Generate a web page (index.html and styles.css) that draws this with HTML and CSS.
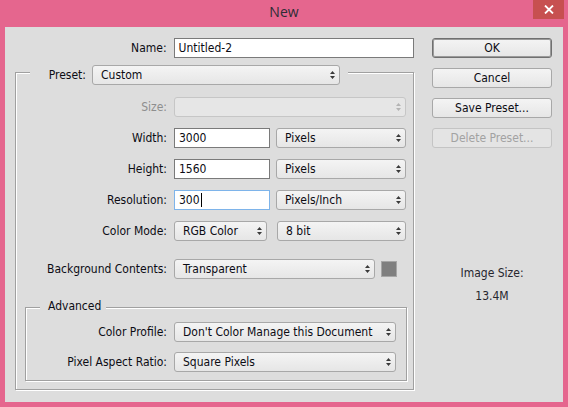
FILE: index.html
```html
<!DOCTYPE html>
<html>
<head>
<meta charset="utf-8">
<link rel="stylesheet" href="styles.css">
</head>
<body>
<div class="titlebar">
  <span></span>
  <div class="title">New</div>
  <div class="close"><svg width="10" height="9" viewBox="0 0 10 9"><path d="M1 0.5 L9 8.5 M9 0.5 L1 8.5" stroke="#fff" stroke-width="1.8"/></svg></div>
</div>
<div class="client">
  <div class="left">
    <div class="namerow">
      <span class="namelbl">Name:</span>
      <div class="input name">Untitled-2</div>
    </div>
    <div class="group">
      <div class="ghead">
        <span class="plbl">Preset:</span>
        <div class="select preset"><span>Custom</span><svg class="arr" width="5" height="8" viewBox="0 0 5 8"><path d="M0 3 L2.5 0 L5 3 Z M0 5 L2.5 8 L5 5 Z" fill="#3a3a3a"/></svg></div>
      </div>
      <div class="fields">
        <div class="row">
          <span class="lbl dis">Size:</span>
          <div class="select disabled wsize"><span></span><svg class="arr" width="5" height="8" viewBox="0 0 5 8"><path d="M0 3 L2.5 0 L5 3 Z M0 5 L2.5 8 L5 5 Z" fill="#b4b4b4"/></svg></div>
        </div>
        <div class="row">
          <span class="lbl">Width:</span>
          <div class="input num">3000</div>
          <div class="select unit"><span>Pixels</span><svg class="arr" width="5" height="8" viewBox="0 0 5 8"><path d="M0 3 L2.5 0 L5 3 Z M0 5 L2.5 8 L5 5 Z" fill="#3a3a3a"/></svg></div>
        </div>
        <div class="row">
          <span class="lbl">Height:</span>
          <div class="input num">1560</div>
          <div class="select unit"><span>Pixels</span><svg class="arr" width="5" height="8" viewBox="0 0 5 8"><path d="M0 3 L2.5 0 L5 3 Z M0 5 L2.5 8 L5 5 Z" fill="#3a3a3a"/></svg></div>
        </div>
        <div class="row">
          <span class="lbl">Resolution:</span>
          <div class="input num focus">300<span class="caret"></span></div>
          <div class="select unit"><span>Pixels/Inch</span><svg class="arr" width="5" height="8" viewBox="0 0 5 8"><path d="M0 3 L2.5 0 L5 3 Z M0 5 L2.5 8 L5 5 Z" fill="#3a3a3a"/></svg></div>
        </div>
        <div class="row">
          <span class="lbl">Color Mode:</span>
          <div class="select mode"><span>RGB Color</span><svg class="arr" width="5" height="8" viewBox="0 0 5 8"><path d="M0 3 L2.5 0 L5 3 Z M0 5 L2.5 8 L5 5 Z" fill="#3a3a3a"/></svg></div>
          <div class="select bits"><span>8 bit</span><svg class="arr" width="5" height="8" viewBox="0 0 5 8"><path d="M0 3 L2.5 0 L5 3 Z M0 5 L2.5 8 L5 5 Z" fill="#3a3a3a"/></svg></div>
        </div>
        <div class="row spaced">
          <span class="lbl">Background Contents:</span>
          <div class="select bg"><span>Transparent</span><svg class="arr" width="5" height="8" viewBox="0 0 5 8"><path d="M0 3 L2.5 0 L5 3 Z M0 5 L2.5 8 L5 5 Z" fill="#3a3a3a"/></svg></div>
          <div class="swatch"></div>
        </div>
      </div>
      <div class="adv">
        <div class="ahead">Advanced</div>
        <div class="afields">
          <div class="row">
            <span class="albl">Color Profile:</span>
            <div class="select wide"><span>Don't Color Manage this Document</span><svg class="arr" width="5" height="8" viewBox="0 0 5 8"><path d="M0 3 L2.5 0 L5 3 Z M0 5 L2.5 8 L5 5 Z" fill="#3a3a3a"/></svg></div>
          </div>
          <div class="row">
            <span class="albl">Pixel Aspect Ratio:</span>
            <div class="select wide"><span>Square Pixels</span><svg class="arr" width="5" height="8" viewBox="0 0 5 8"><path d="M0 3 L2.5 0 L5 3 Z M0 5 L2.5 8 L5 5 Z" fill="#3a3a3a"/></svg></div>
          </div>
        </div>
      </div>
    </div>
  </div>
  <div class="right">
    <div class="buttons">
      <div class="btn default">OK</div>
      <div class="btn">Cancel</div>
      <div class="btn">Save Preset...</div>
      <div class="btn disabled">Delete Preset...</div>
    </div>
    <div class="info">
      <div class="il">Image Size:</div>
      <div class="iv">13.4M</div>
    </div>
  </div>
</div>
</body>
</html>
```

FILE: styles.css
```css
html, body {
  margin: 0;
  padding: 0;
}
body {
  background: #e5668e;
  width: 568px;
  height: 407px;
  overflow: hidden;
  font-family: "DejaVu Sans Condensed", "DejaVu Sans", sans-serif;
  font-stretch: condensed;
  font-size: 12px;
  color: #0c0c14;
}
.titlebar {
  height: 27px;
  display: grid;
  grid-template-columns: 1fr auto 1fr;
  align-items: start;
}
.title {
  font-family: "Open Sans", "Noto Sans", sans-serif;
  font-stretch: normal;
  font-size: 14px;
  color: #2d2d35;
  line-height: 24px;
}
.close {
  justify-self: end;
  margin-right: 4px;
  width: 31px;
  height: 19px;
  background: #c75050;
  display: flex;
  align-items: center;
  justify-content: center;
}
.client {
  margin: 0 5px;
  height: 375px;
  background: #dddddd;
  display: flex;
  padding-top: 11px;
  box-sizing: border-box;
}
.left {
  margin-left: 10px;
  width: 399px;
}
.namerow {
  display: flex;
  align-items: center;
  height: 20px;
}
.namelbl {
  width: 152px;
  text-align: right;
  margin-right: 7px;
}
.input {
  height: 20px;
  box-sizing: border-box;
  border: 1px solid #7a7a7a;
  background: #fff;
  padding-left: 4px;
  display: flex;
  align-items: center;
}
.input.name {
  width: 241px;
}
.input.num {
  width: 96px;
  margin-right: 6px;
}
.input.focus {
  border-color: #7eb4ea;
}
.caret {
  display: inline-block;
  width: 1px;
  height: 14px;
  background: #000;
  margin-left: 1px;
}
.group {
  margin-top: 14px;
  border: 1px solid #a0a0a0;
  box-shadow: inset 1px 1px 0 #fff, 1px 1px 0 #fff;
  padding-bottom: 8px;
}
.ghead {
  display: flex;
  align-items: center;
  width: fit-content;
  margin: -8px 0 0 14px;
  padding-right: 8px;
  background: #dddddd;
}
.plbl {
  width: 56px;
  text-align: right;
  margin-right: 6px;
}
.select {
  height: 20px;
  box-sizing: border-box;
  border: 1px solid #a8a8a8;
  border-radius: 3px;
  background: linear-gradient(#f4f4f4, #e6e6e6);
  padding: 0 4px 0 8px;
  display: flex;
  align-items: center;
  justify-content: space-between;
  white-space: nowrap;
}
.select.disabled {
  border-color: #c6c6c6;
  background: #e6e6e6;
}
.arr {
  flex: none;
}
.preset { width: 248px; }
.wsize { width: 232px; }
.unit { width: 130px; }
.mode { width: 93px; margin-right: 10px; }
.bits { width: 129px; }
.bg { width: 201px; margin-right: 6px; }
.wide { width: 222px; }
.swatch {
  width: 16px;
  height: 16px;
  box-sizing: border-box;
  border: 1px solid #a6a6a6;
  background: #7f7f7f;
}
.fields {
  display: flex;
  flex-direction: column;
  gap: 11px;
  margin-top: 12px;
}
.row {
  display: flex;
  align-items: center;
  height: 20px;
}
.row.spaced {
  margin-top: 7px;
}
.lbl {
  width: 151px;
  text-align: right;
  margin-right: 7px;
}
.lbl.dis {
  color: #8e8e8e;
}
.adv {
  margin: 28px 6px 0 9px;
  border: 1px solid #a0a0a0;
  box-shadow: inset 1px 1px 0 #fff, 1px 1px 0 #fff;
  padding-bottom: 8px;
}
.ahead {
  width: fit-content;
  margin: -9px 0 0 14px;
  padding: 0 5px 0 8px;
  height: 14px;
  line-height: 14px;
  background: #dddddd;
}
.afields {
  display: flex;
  flex-direction: column;
  gap: 10px;
  margin-top: 9px;
}
.albl {
  width: 141px;
  text-align: right;
  margin-right: 7px;
}
.right {
  margin-left: 18px;
  width: 120px;
}
.buttons {
  display: flex;
  flex-direction: column;
  gap: 10px;
}
.btn {
  height: 20px;
  box-sizing: border-box;
  border: 1px solid #a8a8a8;
  border-radius: 3px;
  background: linear-gradient(#f4f4f4, #e6e6e6);
  display: flex;
  align-items: center;
  justify-content: center;
}
.btn.default {
  border-color: #707070;
  box-shadow: inset 0 0 0 1px #9a9a9a;
}
.btn.disabled {
  color: #a2a2a2;
  border-color: #c4c4c4;
  background: #e4e4e4;
}
.info {
  margin-top: 117px;
  text-align: center;
  color: #26262e;
}
.il, .iv {
  line-height: 16px;
}
.iv {
  margin-top: 7px;
}
```
